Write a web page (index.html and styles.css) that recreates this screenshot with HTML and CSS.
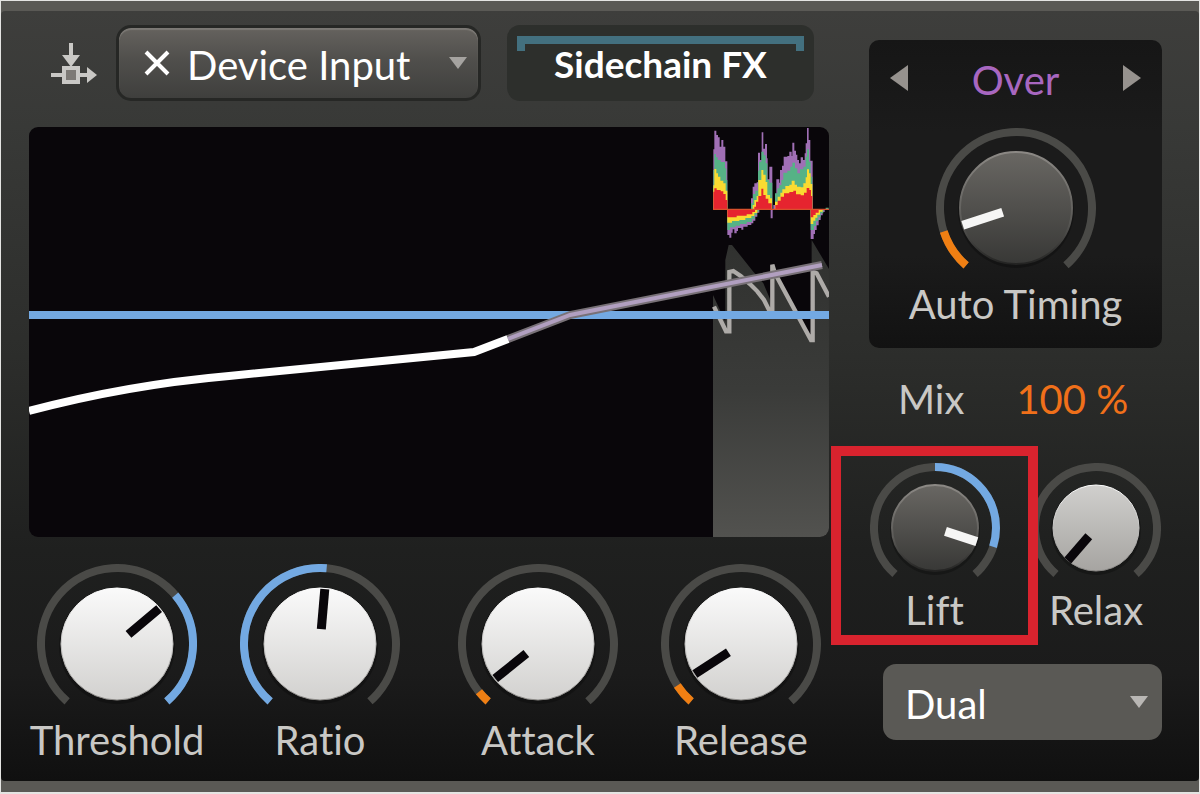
FILE: index.html
```html
<!DOCTYPE html>
<html lang="en">
<head>
  <meta charset="UTF-8">
  <meta name="viewport" content="width=device-width, initial-scale=1.0">
  <title>Dynamics</title>
  <link rel="stylesheet" href="styles.css">
</head>
<body>
  <!-- shared gradients -->
  <svg class="defs" width="0" height="0" aria-hidden="true">
    <defs>
      <linearGradient id="cap-light" x1="0" y1="0" x2="0" y2="1">
        <stop offset="0" stop-color="#fafafa"/>
        <stop offset="1" stop-color="#d2d1cf"/>
      </linearGradient>
      <linearGradient id="cap-grey" x1="0" y1="0" x2="0" y2="1">
        <stop offset="0" stop-color="#d0cfcd"/>
        <stop offset="1" stop-color="#a6a4a1"/>
      </linearGradient>
      <linearGradient id="cap-dark" x1="0" y1="0" x2="0" y2="1">
        <stop offset="0" stop-color="#696763"/>
        <stop offset="1" stop-color="#383836"/>
      </linearGradient>
      <linearGradient id="rim-light" x1="0" y1="0" x2="0" y2="1">
        <stop offset="0" stop-color="#ffffff"/>
        <stop offset="1" stop-color="#8b8986"/>
      </linearGradient>
      <linearGradient id="rim-dark" x1="0" y1="0" x2="0" y2="1">
        <stop offset="0" stop-color="#8c8985"/>
        <stop offset="0.6" stop-color="#5c5b58"/>
        <stop offset="1" stop-color="#232322"/>
      </linearGradient>
    </defs>
  </svg>

  <main class="device">
    <div class="panel">
      <section class="main-col">
        <div class="toolbar">
          <svg class="route-icon" width="48" height="42" viewBox="0 0 48 42" aria-hidden="true">
            <rect x="18" y="1" width="4" height="13" fill="#c9c8c5"/>
            <polygon points="11,13 29,13 20,25" fill="#c9c8c5"/>
            <rect x="0" y="31" width="12" height="4" fill="#c9c8c5"/>
            <rect x="28" y="31" width="9" height="4" fill="#c9c8c5"/>
            <polygon points="36,25 46,33 36,41" fill="#c9c8c5"/>
            <rect x="13" y="26" width="14" height="14" fill="#7d7a76" stroke="#c9c8c5" stroke-width="4"/>
          </svg>
          <div class="dropdown source">
            <svg class="cross" width="26" height="26" viewBox="0 0 26 26" aria-hidden="true">
              <path d="M2 2L24 24M24 2L2 24" stroke="#fff" stroke-width="4" fill="none"/>
            </svg>
            <select aria-label="Sidechain source">
              <option>Device Input</option>
            </select>
            <svg class="caret" width="18" height="12" viewBox="0 0 18 12" aria-hidden="true">
              <polygon points="0,0 18,0 9,12" fill="#a5a3a0"/>
            </svg>
          </div>
          <button class="fx-button" type="button"><span class="bracket"></span>Sidechain FX</button>
        </div>

        <svg class="display" viewBox="0 0 800 410" role="img" aria-label="Transfer curve">
          <defs>
            <linearGradient id="level" gradientUnits="userSpaceOnUse" x1="0" y1="360" x2="0" y2="1251">
              <stop offset="0" stop-color="#30312f"/>
              <stop offset="0.5" stop-color="#3a3b39"/>
              <stop offset="1" stop-color="#52524f"/>
            </linearGradient>
          </defs>
          <rect width="800" height="410" fill="#09060a"/>
          <g transform="translate(671 -7) scale(0.3333)">
            <path fill="url(#level)" d="M39 525L76 605V420L86 375L96 375L160 455L190 490L209 535L218 575V440L335 660V360L387 447V1252H39Z"/>
            <path fill="#a06fb5" d="M40 268V88H43V32H49V45H54V52H59V80H64V60H70V80H76V124H82V268ZM153 268V235H158V200H163V190H170V187H174V98H180V120H185V37H190V86H195V72H201V115H203V178H208V140H217V268ZM220 268V255H229V178H238V188H240V150H246V137H251V110H262V108H268V95H275V108H277V68H283V92H288V104H292V120H297V130H302V112H309V120H314V100H317V70H321V24H326V60H331V122H338V268Z"/>
            <path fill="#56b286" d="M40 268V150H43V102H48V112H53V120H62V126H75V145H79V180H82V268ZM153 268V250H159V222H166V212H174V152H177V125H184V95H191V106H197V130H202V180H208V188H217V268ZM225 268V220H232V205H238V195H244V180H250V158H262V152H271V140H277V128H285V145H292V160H300V148H310V140H317V110H321V88H327V125H332V170H337V268Z"/>
            <path fill="#fadb31" d="M40 268V196H43V147H49V160H54V170H61V182H70V190H77V212H82V268ZM158 268V255H163V240H170V228H175V180H184V150H190V164H197V186H202V225H210V235H216V268ZM225 268V245H233V230H241V218H247V208H256V198H268V194H275V182H284V194H291V200H302V202H310V190H317V172H321V148H327V160H332V192H337V268Z"/>
            <path fill="#e6242f" d="M40 268V215H43V205H50V210H62V214H70V222H77V240H82V268ZM163 268V260H168V245H175V228H184V206H190V225H197V236H205V250H215V268ZM226 268V255H233V242H242V230H252V220H268V216H280V212H288V223H302V226H312V218H320V204H328V210H333V228H337V268Z"/>
            <path fill="#a06fb5" d="M82 268V345H88V353H94V338H98V328H103V340H110V333H114V324H124V329H130V320H143V315H154V310H160V302H166V290H172V278H178V268ZM212 268V295H218V268ZM332 268V357H341V342H345V330H350V316H356V300H362V286H368V276H374V268Z"/>
            <path fill="#56b286" d="M82 268V330H90V322H106V317H120V312H140V306H156V298H164V286H170V276H176V268ZM332 268V330H342V318H348V304H355V292H362V280H370V268ZM377 268V263H386V268Z"/>
            <path fill="#fadb31" d="M82 268V308H96V303H118V300H136V294H154V288H163V279H172V268ZM332 268V312H340V302H346V293H352V284H360V275H368V268Z"/>
            <path fill="#e6242f" d="M82 268V292H110V287H140V283H157V276H165V268ZM332 268V292H340V285H347V278H356V268Z"/>
            <path stroke="#d9502c" stroke-width="4" d="M39 268H387"/>
            <path fill="none" stroke="#aeaba8" stroke-width="13" d="M42 560L78 634H88V456L100 453L122 468L150 492L172 514L192 540L208 572H217V434L225 460L333 660H338V456L350 460L387 530"/>
          </g>
          <rect y="184" width="800" height="8" fill="#73a9e2"/>
          <path fill="none" stroke="#787177" stroke-width="8" d="M479 212L541 188L793 138"/>
          <path fill="none" stroke="#b19fc0" stroke-width="4" d="M479 212L541 188L793 138"/>
          <path fill="none" stroke="#fff" stroke-width="8" d="M0 284C60 268 120 256 200 249L445 225L479 212"/>
        </svg>

        <div class="knob-row">
          <div class="knob-pair">
            <label class="knob">
              <svg width="160" height="142" viewBox="-80 -80 160 142" aria-hidden="true">
                <circle class="track" r="76" pathLength="360" stroke-dasharray="278 360" transform="rotate(-229)"/>
                <circle class="track blue" r="76" pathLength="360" stroke-dasharray="89 360" transform="rotate(-40)"/>
                <circle class="shadow" r="58" cy="2"/>
                <circle r="56" fill="url(#cap-light)" stroke="url(#rim-light)"/>
                <path class="pointer" d="M0 -15V-55" transform="rotate(50)"/>
              </svg>
              <input type="range" min="0" max="278" value="189">
              <span>Threshold</span>
            </label>
            <label class="knob">
              <svg width="160" height="142" viewBox="-80 -80 160 142" aria-hidden="true">
                <circle class="track" r="76" pathLength="360" stroke-dasharray="278 360" transform="rotate(-229)"/>
                <circle class="track blue" r="76" pathLength="360" stroke-dasharray="144 360" transform="rotate(-229)"/>
                <circle class="shadow" r="58" cy="2"/>
                <circle r="56" fill="url(#cap-light)" stroke="url(#rim-light)"/>
                <path class="pointer" d="M0 -15V-55" transform="rotate(5)"/>
              </svg>
              <input type="range" min="0" max="278" value="144">
              <span>Ratio</span>
            </label>
          </div>
          <div class="knob-pair">
            <label class="knob">
              <svg width="160" height="142" viewBox="-80 -80 160 142" aria-hidden="true">
                <circle class="track" r="76" pathLength="360" stroke-dasharray="278 360" transform="rotate(-229)"/>
                <circle class="track orange" r="76" pathLength="360" stroke-dasharray="10 360" transform="rotate(-229)"/>
                <circle class="shadow" r="58" cy="2"/>
                <circle r="56" fill="url(#cap-light)" stroke="url(#rim-light)"/>
                <path class="pointer" d="M0 -15V-55" transform="rotate(-129)"/>
              </svg>
              <input type="range" min="0" max="278" value="10">
              <span>Attack</span>
            </label>
            <label class="knob">
              <svg width="160" height="142" viewBox="-80 -80 160 142" aria-hidden="true">
                <circle class="track" r="76" pathLength="360" stroke-dasharray="278 360" transform="rotate(-229)"/>
                <circle class="track orange" r="76" pathLength="360" stroke-dasharray="16 360" transform="rotate(-229)"/>
                <circle class="shadow" r="58" cy="2"/>
                <circle r="56" fill="url(#cap-light)" stroke="url(#rim-light)"/>
                <path class="pointer" d="M0 -15V-55" transform="rotate(-123)"/>
              </svg>
              <input type="range" min="0" max="278" value="16">
              <span>Release</span>
            </label>
          </div>
        </div>
      </section>

      <section class="side-col">
        <div class="timing-card">
          <div class="mode-switch">
            <button type="button" aria-label="Previous mode">
              <svg width="20" height="26" viewBox="0 0 20 26"><polygon points="19,0 19,26 1,13"/></svg>
            </button>
            <output>Over</output>
            <button type="button" aria-label="Next mode">
              <svg width="20" height="26" viewBox="0 0 20 26"><polygon points="1,0 1,26 19,13"/></svg>
            </button>
          </div>
          <label class="knob">
            <svg width="160" height="142" viewBox="-80 -80 160 142" aria-hidden="true">
              <circle class="track" r="76" pathLength="360" stroke-dasharray="278 360" transform="rotate(-229)"/>
              <circle class="track orange" r="76" pathLength="360" stroke-dasharray="31 360" transform="rotate(-229)"/>
              <circle class="shadow" r="58" cy="2"/>
              <circle r="56" fill="url(#cap-dark)" stroke="url(#rim-dark)" stroke-width="2"/>
              <path class="pointer white" d="M0 -14V-56" transform="rotate(-108)"/>
            </svg>
            <input type="range" min="0" max="278" value="31">
            <span>Auto Timing</span>
          </label>
        </div>

        <div class="mix">
          <label for="mix">Mix</label>
          <input id="mix" type="text" value="100 %">
        </div>

        <div class="small-knobs">
          <label class="knob small highlighted">
            <svg width="130" height="116" viewBox="-65 -65 130 116" aria-hidden="true">
              <circle class="track" r="61" pathLength="360" stroke-dasharray="278 360" transform="rotate(-229)"/>
              <circle class="track blue" r="61" pathLength="360" stroke-dasharray="108 360" transform="rotate(-90)"/>
              <circle class="shadow" r="45" cy="2"/>
              <circle r="43" fill="url(#cap-dark)" stroke="url(#rim-dark)" stroke-width="2"/>
              <path class="pointer white" d="M0 -11V-44" transform="rotate(108)"/>
            </svg>
            <input type="range" min="0" max="278" value="247">
            <span>Lift</span>
          </label>
          <label class="knob small relax">
            <svg width="130" height="116" viewBox="-65 -65 130 116" aria-hidden="true">
              <circle class="track" r="61" pathLength="360" stroke-dasharray="278 360" transform="rotate(-229)"/>
              <circle class="shadow" r="45" cy="2"/>
              <circle r="43" fill="url(#cap-grey)" stroke="url(#rim-light)"/>
              <path class="pointer" d="M0 -11V-43" transform="rotate(-139)"/>
            </svg>
            <input type="range" min="0" max="278" value="0">
            <span>Relax</span>
          </label>
        </div>

        <div class="dropdown channel">
          <select aria-label="Channel mode">
            <option>Dual</option>
          </select>
          <svg class="caret" width="18" height="12" viewBox="0 0 18 12" aria-hidden="true">
            <polygon points="0,0 18,0 9,12" fill="#b9b7b4"/>
          </svg>
        </div>
      </section>
    </div>
  </main>
</body>
</html>
```
FILE: styles.css
```css
* {
  margin: 0;
  padding: 0;
  box-sizing: border-box;
}

:root {
  --text: #c9c8c5;
  --strip: #5a5955;
  --blue: #73a9e2;
  --orange: #f07f13;
  --purple: #a867c0;
  --red: #d9232e;
}

body {
  background-color: #e4e4e2;
  font-family: Lato, sans-serif;
  font-size: 40px;
  font-variant-ligatures: none;
  line-height: 48px;
  color: var(--text);
}

select,
button,
input {
  font: inherit;
  color: inherit;
  border: none;
  background: none;
}

.defs {
  position: absolute;
}

.device {
  margin: 1px;
  padding: 10px 0 11px;
  background-color: var(--strip);
}

.panel {
  display: grid;
  grid-template-columns: minmax(0, 1fr) 331px;
  gap: 2px;
  padding: 14px 37px 17px 28px;
  border-radius: 4px;
  background: linear-gradient(#3e3e3c 0%, #383937 15%, #2c2d2b 45%, #1f201f 70%, #1b1b1b 86%, #101010 100%);
}

/* Toolbar */
.toolbar {
  display: flex;
  align-items: center;
  height: 76px;
  margin-bottom: 26px;
  padding: 0 15px 0 22px;
}

.route-icon {
  flex: none;
  margin-right: 17px;
}

.dropdown {
  position: relative;
  display: flex;
  align-items: center;
}

.dropdown select {
  width: 100%;
  height: 100%;
  appearance: none;
  color: #fff;
}

.dropdown svg {
  position: absolute;
  pointer-events: none;
}

.dropdown .caret {
  right: 14px;
}

.source {
  flex: 1;
  height: 76px;
  margin-right: 26px;
  border: 3px solid #262725;
  border-radius: 15px;
  background: linear-gradient(#65625e, #504f4c 45%, #3f3f3d);
  box-shadow: inset 0 2px 1px #7c7975;
}

.source .cross {
  left: 25px;
}

.dropdown.source .caret {
  right: 11px;
}

.source select {
  padding: 4px 0 0 68px;
}

.fx-button {
  position: relative;
  width: 307px;
  height: 76px;
  padding-top: 2px;
  border-radius: 13px;
  background-color: #2d2f2c;
  color: #fff;
  font-size: 37px;
  font-weight: 700;
}

.bracket {
  position: absolute;
  top: 11px;
  left: 10px;
  right: 10px;
  height: 15px;
  border: 8px solid #43707f;
  border-bottom: none;
}

/* Curve display */
.display {
  display: block;
  width: 100%;
  height: auto;
  margin-bottom: 27px;
  border-radius: 9px;
}

/* Knobs */
.knob-row {
  display: flex;
  justify-content: space-between;
}

.knob-pair {
  display: flex;
  gap: 27px;
}

.knob {
  position: relative;
  display: flex;
  flex-direction: column;
  align-items: center;
  gap: 10px;
  width: 176px;
  white-space: nowrap;
}

.knob input {
  position: absolute;
  top: 0;
  width: 100%;
  height: 142px;
  opacity: 0;
  cursor: pointer;
}

.track {
  fill: none;
  stroke: #4a4a47;
  stroke-width: 8;
}

.track.blue {
  stroke: var(--blue);
}

.track.orange {
  stroke: var(--orange);
}

.shadow {
  fill: #000;
  fill-opacity: 0.25;
}

.pointer {
  stroke: #09060a;
  stroke-width: 9;
}

.pointer.white {
  stroke: #f6f6f5;
}

/* Right column */
.side-col {
  display: flex;
  flex-direction: column;
  padding-top: 15px;
}

.timing-card {
  display: flex;
  flex-direction: column;
  align-items: center;
  height: 308px;
  margin-left: 38px;
  padding: 16px 20px 0;
  border-radius: 10px;
  background: linear-gradient(#161616, #1b1b1b 30%, #1b1b1b 70%, #121212);
}

.mode-switch {
  display: flex;
  justify-content: space-between;
  width: 100%;
  margin-bottom: 24px;
  color: var(--purple);
}

.mode-switch button {
  display: flex;
  padding: 9px 0;
  cursor: pointer;
}

.mode-switch svg {
  fill: #96928e;
}

.mix {
  display: flex;
  gap: 52px;
  padding: 27px 0 23px 67px;
}

.mix input {
  width: 130px;
  color: #f0701a;
}

.small-knobs {
  display: flex;
}

.small {
  gap: 7px;
  padding-top: 17px;
}

.small input {
  height: 116px;
}

.highlighted {
  z-index: 1;
  width: 207px;
  height: 199px;
  padding-top: 7px;
  border: 10px solid var(--red);
}

.relax {
  width: 132px;
  margin-left: -8px;
}

.channel {
  height: 76px;
  margin: 19px 0 0 52px;
  border-radius: 13px;
  background-color: var(--strip);
}

.channel select {
  padding: 4px 0 0 22px;
}
```
